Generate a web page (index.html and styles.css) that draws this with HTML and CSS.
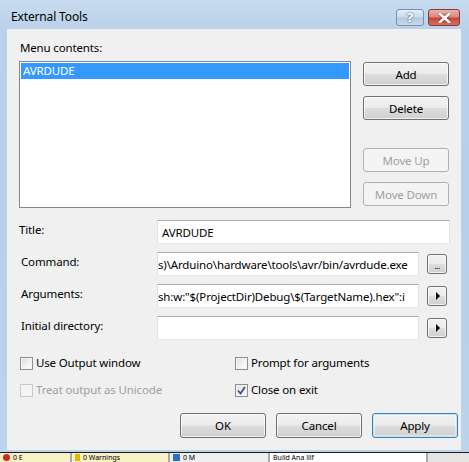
FILE: index.html
```html
<!DOCTYPE html>
<html>
<head>
<meta charset="utf-8">
<link rel="stylesheet" href="styles.css">
</head>
<body>
<div class="window">
  <div class="titlebar">
    <span class="title">External Tools</span>
    <div class="caption-btns">
      <div class="cap help">?</div>
      <div class="cap close">
        <svg width="13" height="10" viewBox="0 0 13 10"><path d="M2 1 L11 9 M11 1 L2 9" stroke="#fff" stroke-width="2.6" stroke-linecap="square"/></svg>
      </div>
    </div>
  </div>
  <div class="client">
    <div class="label menu-label">Menu contents:</div>
    <div class="top-row">
      <div class="listbox">
        <div class="item selected">AVRDUDE</div>
      </div>
      <div class="side-btns">
        <button class="btn">Add</button>
        <button class="btn">Delete</button>
        <button class="btn disabled mt">Move Up</button>
        <button class="btn disabled">Move Down</button>
      </div>
    </div>
    <div class="form">
      <div class="row">
        <span class="flabel first">Title:</span>
        <div class="input wide"><span>AVRDUDE</span></div>
      </div>
      <div class="row">
        <span class="flabel">Command:</span>
        <div class="input narrow scrolled"><span>s)\Arduino\hardware\tools\avr/bin/avrdude.exe</span></div>
        <div class="mini"><span class="dots">...</span></div>
      </div>
      <div class="row">
        <span class="flabel">Arguments:</span>
        <div class="input narrow scrolled end"><span>sh:w:"$(ProjectDir)Debug\$(TargetName).hex":i</span></div>
        <div class="mini"><span class="tri"></span></div>
      </div>
      <div class="row">
        <span class="flabel">Initial directory:</span>
        <div class="input narrow"><span></span></div>
        <div class="mini"><span class="tri"></span></div>
      </div>
    </div>
    <div class="checks">
      <label class="chk"><span class="box"></span>Use Output window</label>
      <label class="chk"><span class="box"></span>Prompt for arguments</label>
      <label class="chk off"><span class="box"></span>Treat output as Unicode</label>
      <label class="chk"><span class="box checked"><svg width="9" height="9" viewBox="0 0 9 9"><path d="M1 4.5 L3.5 7.5 L8 1" fill="none" stroke="#3b4f8a" stroke-width="1.8"/></svg></span>Close on exit</label>
    </div>
    <div class="dlg-btns">
      <button class="btn">OK</button>
      <button class="btn">Cancel</button>
      <button class="btn focus">Apply</button>
    </div>
  </div>
  <div class="taskstrip">
    <div class="seg s1"><span class="err"></span>0 E</div>
    <div class="seg s2"><span class="warn"></span>0 Warnings</div>
    <div class="seg s3"><span class="info"></span>0 M</div>
    <div class="seg s4">Build  Ana  lllf</div>
    <div class="seg s5"></div>
  </div>
</div>
</body>
</html>
```

FILE: styles.css
```css
* { box-sizing: border-box; }
html, body { margin: 0; padding: 0; }
body {
  width: 469px;
  height: 462px;
  overflow: hidden;
  font-family: "Noto Sans", "Open Sans", sans-serif;
  font-size: 11.5px;
  letter-spacing: -0.15px;
  color: #000;
}
.window {
  width: 469px;
  height: 462px;
  background: linear-gradient(180deg, #c7dbef 0px, #b9d1ea 30px, #b7cfe8 200px, #bcd3ec 450px);
  display: flex;
  flex-direction: column;
  position: relative;
}
.titlebar {
  height: 29px;
  display: flex;
  align-items: flex-start;
  justify-content: space-between;
  padding-left: 11px;
  padding-right: 9px;
}
.title {
  margin-top: 9px;
  font-size: 12px;
  line-height: 16px;
  color: #000;
}
.caption-btns {
  display: flex;
  gap: 4px;
  margin-top: 9px;
}
.cap {
  height: 17px;
  border-radius: 3px;
  display: flex;
  align-items: center;
  justify-content: center;
}
.help {
  width: 28px;
  border: 1px solid #7b90ac;
  background: linear-gradient(180deg, #e4edf7 0%, #cbdbee 48%, #b4c8e0 52%, #c7d8ec 100%);
  color: #fff;
  font-weight: bold;
  font-size: 13px;
  text-shadow: 0 0 2px #4b5e78, 0 0 1px #4b5e78;
  font-family: "DejaVu Sans", sans-serif;
}
.close {
  width: 32px;
  border: 1px solid #8a3a33;
  background: linear-gradient(180deg, #eab2a8 0%, #d98a7c 45%, #c6493b 55%, #d4705f 100%);
}
.close svg path { filter: drop-shadow(0 0 1px #6b1f17); }
.client {
  margin-left: 7px;
  width: 454px;
  height: 421px;
  background: #f0f0f0;
  padding: 11px 0 0 12px;
  display: flex;
  flex-direction: column;
}
.label { line-height: 16px; }
.menu-label { margin-left: 1px; }
.top-row {
  display: flex;
  margin-top: 5px;
  gap: 12px;
}
.listbox {
  width: 332px;
  height: 147px;
  border: 1px solid #828790;
  background: #fff;
  padding: 1px;
}
.item {
  height: 16px;
  line-height: 16px;
  padding-left: 2px;
}
.item.selected {
  background: #3399ff;
  color: #fff;
}
.side-btns {
  display: flex;
  flex-direction: column;
  padding-top: 1px;
  gap: 10px;
}
.btn {
  font-family: inherit;
  font-size: 11.5px;
  letter-spacing: -0.15px;
  width: 86px;
  height: 25px;
  padding: 0;
  border: 1px solid #707070;
  border-radius: 3px;
  background: linear-gradient(180deg, #f2f2f2 0%, #ebebeb 48%, #dddddd 52%, #cfcfcf 100%);
  box-shadow: inset 0 0 0 1px rgba(255,255,255,0.7);
  color: #000;
}
.side-btns .btn { height: 24px; }
.btn.mt { margin-top: 18px; }
.btn.disabled {
  border-color: #adb2b5;
  background: #f4f4f4;
  box-shadow: none;
  color: #a0a0a0;
}
.btn.focus {
  border-color: #3c7fb1;
  box-shadow: inset 0 0 0 1px #bfe6fb, inset 0 0 0 2px rgba(255,255,255,0.4);
}
.form {
  margin-top: 12px;
  display: flex;
  flex-direction: column;
  gap: 8px;
}
.row {
  display: flex;
  align-items: center;
  height: 24px;
}
.flabel {
  width: 138px;
  padding-left: 2px;
  line-height: 16px;
  margin-top: -4px;
}
.flabel.first { padding-left: 0; }
.input {
  height: 24px;
  border: 1px solid #abadb3;
  border-color: #abadb3 #e2e3ea #e3e9ef #e2e3ea;
  background: #fff;
  display: flex;
  align-items: center;
  padding: 0 4px 0 4px;
  overflow: hidden;
  white-space: nowrap;
}
.input.wide { width: 293px; }
.input.narrow { width: 262px; }
.input.scrolled { padding-left: 0; }
.input span { flex: none; }
.mini {
  width: 20px;
  height: 20px;
  margin-left: 8px;
  border: 1px solid #707070;
  border-radius: 3px;
  background: linear-gradient(180deg, #f2f2f2 0%, #ebebeb 48%, #dddddd 52%, #cfcfcf 100%);
  box-shadow: inset 0 0 0 1px rgba(255,255,255,0.7);
  display: flex;
  align-items: center;
  justify-content: center;
}
.dots {
  font-size: 9px;
  line-height: 9px;
  margin-top: 3px;
  letter-spacing: -0.5px;
}
.tri {
  width: 0;
  height: 0;
  border-left: 4px solid #000;
  border-top: 4px solid transparent;
  border-bottom: 4px solid transparent;
  margin-left: 1px;
}
.checks {
  margin-top: 15px;
  margin-left: 1px;
  display: grid;
  grid-template-columns: 215px auto;
  row-gap: 11px;
}
.chk {
  display: flex;
  align-items: center;
  gap: 3px;
  line-height: 16px;
  height: 16px;
}
.chk.off { color: #a0a0a0; }
.box {
  width: 13px;
  height: 13px;
  border: 1px solid #8e8f8f;
  background: linear-gradient(135deg, #dcdcdc 0%, #f4f4f4 60%, #fff 100%);
  box-shadow: inset 0 0 0 1px #f4f4f4;
  display: flex;
  align-items: center;
  justify-content: center;
}
.chk.off .box {
  border-color: #c9c9c9;
  background: #f4f4f4;
  box-shadow: none;
}
.dlg-btns {
  display: flex;
  gap: 9px;
  margin-top: 15px;
  margin-left: 161px;
}
.dlg-btns .btn { width: 86px; }
.dlg-btns .btn + .btn { margin-left: 1px; }
.taskstrip {
  margin-top: 2px;
  height: 10px;
  border-top: 1px solid #1b1b1b;
  display: flex;
  font-size: 7px;
  line-height: 9px;
  letter-spacing: 0;
  overflow: hidden;
  background: #d4d0c8;
}
.seg {
  height: 9px;
  display: flex;
  align-items: center;
  gap: 3px;
  padding-left: 3px;
  border-right: 2px solid #a9a9a9;
  white-space: nowrap;
  overflow: hidden;
}
.s1 { width: 72px; background: #f6f1c6; }
.s2 { width: 98px; background: #f6f1c6; }
.s3 { width: 100px; background: #eeeeee; }
.s4 { width: 158px; background: #ffffff; }
.s5 { flex: 1; background: #e4e4e4; border-right: none; }
.err { width: 7px; height: 7px; border-radius: 50%; background: #d02a1e; }
.warn { width: 5px; height: 7px; background: #e7b500; }
.info { width: 7px; height: 7px; background: #2a6fc9; }
```
